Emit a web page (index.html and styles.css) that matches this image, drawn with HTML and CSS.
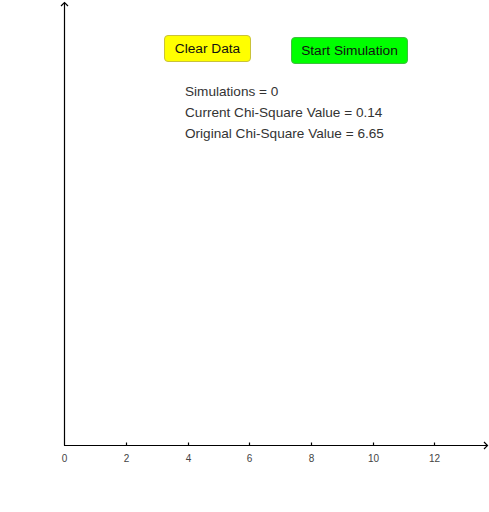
FILE: index.html
```html
<!DOCTYPE html>
<html>
<head>
<meta charset="utf-8">
<link rel="stylesheet" href="styles.css">
</head>
<body>
<div class="applet">
  <svg class="graph" width="489" height="512" viewBox="0 0 489 512">
    <g stroke="#000" stroke-width="1.2" fill="none">
      <line x1="64.5" y1="3" x2="64.5" y2="445.5"/>
      <line x1="64" y1="445.5" x2="487" y2="445.5"/>
      <path d="M61 6 L64.5 2.5 L68 6"/>
      <path d="M484 442 L487.5 445.5 L484 449"/>
      <line x1="126.5" y1="442.5" x2="126.5" y2="445"/>
      <line x1="188.5" y1="442.5" x2="188.5" y2="445"/>
      <line x1="249.5" y1="442.5" x2="249.5" y2="445"/>
      <line x1="311.5" y1="442.5" x2="311.5" y2="445"/>
      <line x1="373.5" y1="442.5" x2="373.5" y2="445"/>
      <line x1="434.5" y1="442.5" x2="434.5" y2="445"/>
    </g>
    <g class="ticks" text-anchor="middle">
      <text x="64.5" y="462">0</text>
      <text x="126.5" y="462">2</text>
      <text x="188.5" y="462">4</text>
      <text x="249.5" y="462">6</text>
      <text x="311.5" y="462">8</text>
      <text x="373.5" y="462">10</text>
      <text x="434.5" y="462">12</text>
    </g>
  </svg>
  <div class="controls">
    <div class="buttons">
      <button class="btn clear">Clear Data</button>
      <button class="btn start">Start Simulation</button>
    </div>
    <div class="stats">
      <div>Simulations = 0</div>
      <div>Current Chi-Square Value = 0.14</div>
      <div>Original Chi-Square Value = 6.65</div>
    </div>
  </div>
</div>
</body>
</html>
```
FILE: styles.css
```css
html, body {
  margin: 0;
  padding: 0;
  background: #fff;
}
.applet {
  position: relative;
  width: 489px;
  height: 512px;
  overflow: hidden;
  font-family: "Liberation Sans", Arial, sans-serif;
}
.graph {
  position: absolute;
  left: 0;
  top: 0;
}
.ticks text {
  font-family: "Liberation Sans", Arial, sans-serif;
  font-size: 10px;
  fill: #444;
}
.controls {
  position: relative;
  padding-top: 35px;
}
.buttons {
  display: flex;
  align-items: flex-start;
  padding-left: 164px;
  gap: 40px;
}
.btn {
  font-family: "Liberation Sans", Arial, sans-serif;
  font-size: 13.7px;
  color: #111;
  height: 27px;
  padding: 0;
  border-radius: 4px;
  margin: 0;
}
.clear {
  width: 87px;
  background: #ffff00;
  border: 1px solid #c9c23a;
}
.start {
  width: 117px;
  margin-top: 2px;
  background: #00ff00;
  border: 1px solid #3fbf3f;
}
.stats {
  padding-left: 185px;
  padding-top: 17px;
  font-size: 13.6px;
  color: #333;
  line-height: 21px;
}
```
